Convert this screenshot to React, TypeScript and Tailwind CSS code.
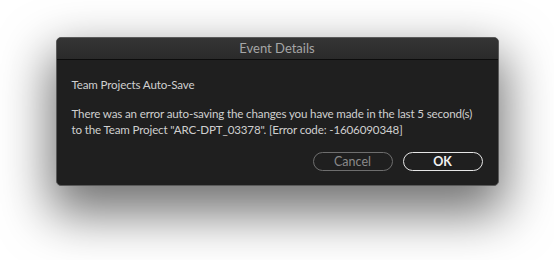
export default function App() {
  return (
    <div className="flex h-[260px] w-[554px] justify-center bg-white pt-[37px] font-['Lato',sans-serif]">
      <div className="flex h-[149px] w-[443px] flex-col overflow-hidden rounded-[5px] border border-[#5a5a5a] bg-[#1f1f1f] shadow-[0_22px_50px_6px_rgba(0,0,0,0.55)]">
        <div className="flex h-[22px] shrink-0 items-center justify-center border-b border-[#0c0c0c] bg-gradient-to-b from-[#353535] to-[#2a2a2a] text-[13px] text-[#a6a6a6]">
          Event Details
        </div>
        <div className="flex flex-1 flex-col px-[15px] pt-[17px] text-[11.6px] leading-[16px] tracking-[-0.15px] text-[#cfcfcf]">
          <p className="whitespace-nowrap">Team Projects Auto-Save</p>
          <p className="mt-[13px] whitespace-nowrap">
            There was an error auto-saving the changes you have made in the last 5 second(s)
            <br />
            to the Team Project "ARC-DPT_03378". [Error code: -1606090348]
          </p>
          <div className="mt-auto mb-[14px] flex justify-end gap-[10px] tracking-normal">
            <button className="flex h-[19px] w-[80px] items-center justify-center rounded-full border border-[#6e6e6e] text-[12.5px] text-[#8a8a8a]">
              Cancel
            </button>
            <button className="flex h-[19px] w-[80px] items-center justify-center rounded-full border-[1.5px] border-[#e6e6e6] text-[12.5px] font-bold text-[#f2f2f2]">
              OK
            </button>
          </div>
        </div>
      </div>
    </div>
  )
}
